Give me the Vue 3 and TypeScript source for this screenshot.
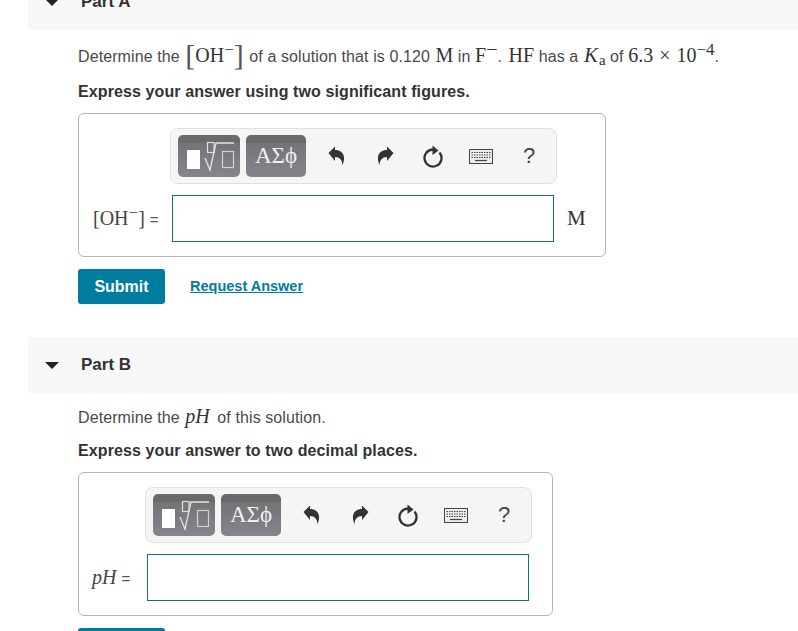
<script setup lang="ts">
const tools: string[] = ['undo', 'redo', 'reset', 'keys', 'help']
</script>

<template>
  <div class="page">
    <header class="part-head first">
      <span class="caret"></span>
      <h2>Part A</h2>
    </header>
    <section class="part-body">
      <p class="prompt">
        Determine the
        <span class="math bracketed"><i class="br">[</i>OH<sup>−</sup><i class="br">]</i></span>
        of a solution that is 0.120 <span class="math unit-m">M</span> in <span class="math ion">F<sup>−</sup></span>.
        <span class="math hf">HF</span> has a <span class="math ka"><em>K</em><sub>a</sub></span> of
        <span class="math sci">6.3 × 10<sup>−4</sup></span>.
      </p>
      <p class="instr">Express your answer using two significant figures.</p>

      <div class="answer-box wide">
        <div class="toolbar">
          <div class="tpl-btn">
            <svg width="62" height="42" viewBox="0 0 62 42">
              <rect x="9" y="15" width="13" height="19" fill="#fff" />
              <rect x="29.5" y="7.5" width="6.5" height="10" fill="none" stroke="#ddd" stroke-width="1.2" />
              <path d="M27 23 L32 35 L38 8 H56" fill="none" stroke="#e4e4e4" stroke-width="1.3" />
              <rect x="44.5" y="16.5" width="11" height="16" fill="none" stroke="#d0d0d0" stroke-width="1.2" />
            </svg>
          </div>
          <div class="tpl-btn sym">ΑΣϕ</div>
          <div class="tools">
            <span v-for="t in tools" :key="t" class="tool">
              <svg v-if="t === 'undo'" width="18" height="20" viewBox="0 0 18 20">
                <path d="M0.5 7 L7 0.5 V4 C13 4 19 8 14.5 19.5 C14.5 14 11.500 11 7 11 V15 Z" fill="#333" />
              </svg>
              <svg v-else-if="t === 'redo'" width="18" height="20" viewBox="0 0 18 20">
                <path d="M17.5 7 L11 0.5 V4 C5 4 -1 8 3.5 19.5 C3.500 14 6.500 11 11 11 V15 Z" fill="#333" />
              </svg>
              <svg v-else-if="t === 'reset'" width="20" height="24" viewBox="0 0 20 24">
                <path d="M16.5 8.5 A8.5 8.5 0 1 1 10 5.5" fill="none" stroke="#333" stroke-width="2.3" />
                <path d="M9.5 1.5 L15.5 6.5 L9.5 11 Z" fill="#333" />
              </svg>
              <svg v-else-if="t === 'keys'" width="24" height="15" viewBox="0 0 24 15">
                <rect x="0.5" y="0.5" width="23" height="14" fill="#eee" stroke="#444" />
                <path d="M2.5 3.5 H21.5 M2.5 6 H21.5 M2.5 8.5 H21.5" stroke="#444" stroke-width="1.2" stroke-dasharray="1.5 1" />
                <path d="M6 11.5 H18" stroke="#444" stroke-width="1.2" />
              </svg>
              <span v-else class="help">?</span>
            </span>
          </div>
        </div>
        <div class="answer-row">
          <label class="ans-label first-label"><span class="math label-oh">[OH<sup>−</sup>]</span><span class="eq">=</span></label>
          <input class="ans-input" type="text" />
          <span class="unit math">M</span>
        </div>
      </div>

      <div class="actions">
        <button class="submit" type="button">Submit</button>
        <a class="request" href="#">Request Answer</a>
      </div>
    </section>

    <header class="part-head">
      <span class="caret"></span>
      <h2>Part B</h2>
    </header>
    <section class="part-body second">
      <p class="prompt small">
        Determine the <span class="math ph"><em>pH</em></span> of this solution.
      </p>
      <p class="instr">Express your answer to two decimal places.</p>

      <div class="answer-box narrow">
        <div class="toolbar">
          <div class="tpl-btn">
            <svg width="62" height="42" viewBox="0 0 62 42">
              <rect x="9" y="15" width="13" height="19" fill="#fff" />
              <rect x="29.5" y="7.5" width="6.5" height="10" fill="none" stroke="#ddd" stroke-width="1.2" />
              <path d="M27 23 L32 35 L38 8 H56" fill="none" stroke="#e4e4e4" stroke-width="1.3" />
              <rect x="44.5" y="16.5" width="11" height="16" fill="none" stroke="#d0d0d0" stroke-width="1.2" />
            </svg>
          </div>
          <div class="tpl-btn sym">ΑΣϕ</div>
          <div class="tools">
            <span v-for="t in tools" :key="t" class="tool">
              <svg v-if="t === 'undo'" width="18" height="20" viewBox="0 0 18 20">
                <path d="M0.5 7 L7 0.5 V4 C13 4 19 8 14.5 19.5 C14.5 14 11.500 11 7 11 V15 Z" fill="#333" />
              </svg>
              <svg v-else-if="t === 'redo'" width="18" height="20" viewBox="0 0 18 20">
                <path d="M17.5 7 L11 0.5 V4 C5 4 -1 8 3.5 19.5 C3.500 14 6.500 11 11 11 V15 Z" fill="#333" />
              </svg>
              <svg v-else-if="t === 'reset'" width="20" height="24" viewBox="0 0 20 24">
                <path d="M16.5 8.5 A8.5 8.5 0 1 1 10 5.5" fill="none" stroke="#333" stroke-width="2.3" />
                <path d="M9.5 1.5 L15.5 6.5 L9.5 11 Z" fill="#333" />
              </svg>
              <svg v-else-if="t === 'keys'" width="24" height="15" viewBox="0 0 24 15">
                <rect x="0.5" y="0.5" width="23" height="14" fill="#eee" stroke="#444" />
                <path d="M2.5 3.5 H21.5 M2.5 6 H21.5 M2.5 8.5 H21.5" stroke="#444" stroke-width="1.2" stroke-dasharray="1.5 1" />
                <path d="M6 11.5 H18" stroke="#444" stroke-width="1.2" />
              </svg>
              <span v-else class="help">?</span>
            </span>
          </div>
        </div>
        <div class="answer-row">
          <label class="ans-label"><span class="math"><em>pH</em></span><span class="eq">=</span></label>
          <input class="ans-input" type="text" />
        </div>
      </div>

      <div class="actions">
        <button class="submit" type="button">Submit</button>
      </div>
    </section>
  </div>
</template>

<style>
html,
body {
  margin: 0;
  background: #fff;
  overflow: hidden;
}
</style>

<style scoped>
.page {
  height: 631px;
  overflow: hidden;
  font-family: 'Liberation Sans', Arial, sans-serif;
  color: #4a4a4a;
  font-size: 16px;
}

.part-head {
  display: flex;
  align-items: center;
  height: 56px;
  margin-left: 28px;
  background: #f8f8f8;
  position: relative;
}

.part-head.first {
  margin-top: -26px;
}

.caret {
  position: absolute;
  left: 17px;
  width: 0;
  height: 0;
  border-left: 7px solid transparent;
  border-right: 7px solid transparent;
  border-top: 7px solid #222;
}

.part-head h2 {
  margin: 0 0 0 53px;
  font-size: 17px;
  line-height: 20px;
  font-weight: 700;
  color: #333;
}

.part-body {
  padding: 0 0 0 78px;
  height: 307px;
  box-sizing: border-box;
}

.prompt {
  margin: 0;
  padding-top: 13px;
  height: 37px;
  line-height: 24px;
  letter-spacing: 0.1px;
  white-space: nowrap;
}

.prompt.small {
  padding-top: 11px;
  height: 35px;
}

.instr {
  margin: 0;
  font-weight: 700;
  color: #333;
  line-height: 24px;
  letter-spacing: 0.1px;
}

.math {
  font-family: 'Liberation Serif', 'Times New Roman', serif;
  font-size: 20px;
  color: #333;
  letter-spacing: 0;
}

.math sup {
  font-size: 17px;
  line-height: 0;
  vertical-align: 7px;
}

.math sub {
  font-size: 15px;
  line-height: 0;
  vertical-align: -3px;
  margin-left: 1px;
}

.bracketed {
  margin: 0 1px 0 1px;
}

.bracketed .br {
  font-style: normal;
  font-size: 30px;
  line-height: 0;
  vertical-align: -3px;
  color: #555;
}

.unit-m {
  margin-left: 1px;
}

.ion sup {
  font-size: 20px;
  vertical-align: 6px;
}

.hf {
  margin-left: 2px;
}

.ka {
  margin-left: 1px;
  font-size: 21px;
}

.sci {
  word-spacing: 1px;
}

.ph {
  margin: 0 3px 0 1px;
}

.answer-box {
  box-sizing: border-box;
  border: 1px solid #b5b5b5;
  border-radius: 6px;
  height: 144px;
  margin-top: 9px;
  display: flex;
  flex-direction: column;
}

.answer-box.wide {
  width: 528px;
  padding: 14px 0 0 91px;
}

.answer-box.narrow {
  width: 475px;
  padding: 14px 0 0 66px;
}

.toolbar {
  display: flex;
  align-items: center;
  box-sizing: border-box;
  width: 387px;
  height: 56px;
  padding-left: 7px;
  gap: 6px;
  background: #f5f5f5;
  border: 1px solid #e0e0e0;
  border-radius: 8px;
}

.tpl-btn {
  flex: none;
  width: 62px;
  height: 42px;
  border-radius: 5px;
  background: linear-gradient(#6a6a6a 0 8px, #737378 8px, #85858b);
}

.tpl-btn svg {
  display: block;
}

.sym {
  width: 60px;
  line-height: 41px;
  text-align: center;
  font-family: 'Liberation Serif', serif;
  font-size: 23px;
  color: #f0f0f0;
}

.tools {
  display: flex;
  align-items: center;
  margin-left: 1px;
}

.tool {
  width: 48px;
  display: flex;
  justify-content: center;
  align-items: center;
}

.help {
  font-size: 22px;
  color: #444;
}

.answer-row {
  display: flex;
  align-items: center;
  margin-top: 11px;
}

.wide .answer-row {
  margin-left: -91px;
}

.narrow .answer-row {
  margin-left: -66px;
}

.ans-label {
  box-sizing: border-box;
  width: 68px;
  padding-left: 13px;
  white-space: nowrap;
}

.ans-label.first-label {
  width: 93px;
  padding-left: 14px;
}

.ans-label .math {
  color: #444;
}

.eq {
  font-size: 15px;
  color: #555;
  margin-left: 5px;
}

.ans-input {
  box-sizing: border-box;
  width: 382px;
  height: 47px;
  border: 1px solid #14707f;
  background: #fff;
  outline: none;
  padding: 0;
}

.unit {
  margin-left: 13px;
  font-size: 21px;
}

.actions {
  display: flex;
  align-items: center;
  margin-top: 12px;
  gap: 25px;
}

.submit {
  width: 87px;
  height: 35px;
  border: none;
  border-radius: 3px;
  background: #007c9e;
  color: #fff;
  font-family: inherit;
  font-size: 16px;
  font-weight: 700;
  padding: 0;
}

.request {
  color: #007c9e;
  font-size: 14.5px;
  font-weight: 700;
  padding-bottom: 2px;
}
</style>
